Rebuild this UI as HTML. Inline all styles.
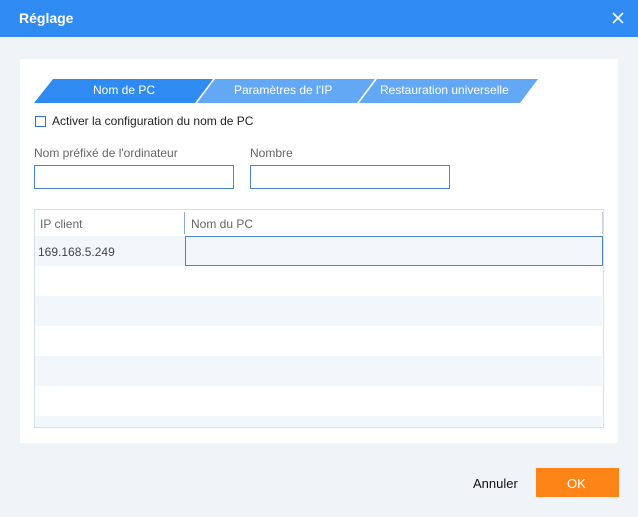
<!DOCTYPE html>
<html><head><meta charset="utf-8"><style>
*{margin:0;padding:0;box-sizing:border-box}
body{width:638px;height:517px;background:#f0f4f9;font-family:"Liberation Sans",sans-serif;font-size:12px;color:#333;position:relative;overflow:hidden}
.t{position:absolute;white-space:nowrap}
.bar{position:absolute;left:0;top:0;width:638px;height:37px;background:#2f8bf2}
.panel{position:absolute;left:20px;top:59px;width:598px;height:384px;background:#fff}
.in{position:absolute;height:24px;border:1px solid #4a86c8;background:#fff}
.row{position:absolute;left:35px;width:567px;height:30px}
</style></head><body>
<div class="bar"></div>
<div class="t" style="left:19px;top:10px;color:#fff;font-weight:bold;font-size:14px">Réglage</div>
<svg style="position:absolute;left:611px;top:11px" width="14" height="14"><path d="M2 2L12 12M12 2L2 12" stroke="#fff" stroke-width="1.6"/></svg>
<div class="panel"></div>
<svg style="position:absolute;left:0;top:0" width="638" height="110">
<polygon points="53,79 213,79 195,103 34,103" fill="#2f8bf2"/>
<polygon points="215,79 375,79 357,103 197,103" fill="#63a8f4"/>
<polygon points="377,79 538,79 520,103 359,103" fill="#63a8f4"/>
</svg>
<div class="t" style="left:93px;top:83px;color:#fff">Nom de PC</div>
<div class="t" style="left:234px;top:83px;color:#fff">Paramètres de l'IP</div>
<div class="t" style="left:380px;top:83px;color:#fff">Restauration universelle</div>
<div style="position:absolute;left:35px;top:116px;width:11px;height:11px;border:1px solid #2f6fc4"></div>
<div class="t" style="left:52px;top:114px;color:#222">Activer la configuration du nom de PC</div>
<div class="t" style="left:34px;top:146px;color:#666">Nom préfixé de l'ordinateur</div>
<div class="t" style="left:250px;top:146px;color:#666">Nombre</div>
<div class="in" style="left:34px;top:165px;width:200px"></div>
<div class="in" style="left:250px;top:165px;width:200px"></div>
<div style="position:absolute;left:34px;top:209px;width:570px;height:219px;border:1px solid #d6dfea;background:#fff"></div>
<div style="position:absolute;left:184px;top:212px;width:1px;height:22px;background:#8aa8d0"></div>
<div style="position:absolute;left:602px;top:212px;width:1px;height:22px;background:#c8d4e4"></div>
<div class="t" style="left:40px;top:217px;color:#666">IP client</div>
<div class="t" style="left:191px;top:217px;color:#666">Nom du PC</div>
<div class="row" style="top:236px;background:#f2f7fc"></div>
<div class="row" style="top:296px;background:#f2f7fc"></div>
<div class="row" style="top:356px;background:#f2f7fc"></div>
<div class="row" style="top:416px;height:11px;background:#f2f7fc"></div>
<div style="position:absolute;left:185px;top:236px;width:418px;height:30px;border:1px solid #4a86c8;background:#f2f7fc"></div>
<div class="t" style="left:38px;top:245px;color:#444">169.168.5.249</div>
<div class="t" style="left:473px;top:476px;color:#111;font-size:13px">Annuler</div>
<div style="position:absolute;left:536px;top:468px;width:83px;height:29px;background:#fe8418"></div>
<div class="t" style="left:567px;top:476px;color:#fff;font-size:13px">OK</div>
</body></html>
